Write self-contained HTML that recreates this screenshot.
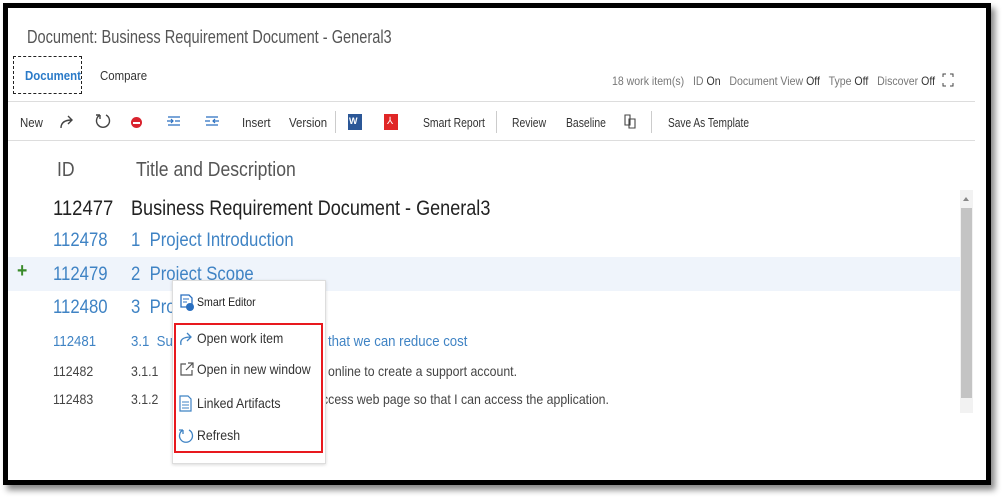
<!DOCTYPE html>
<html><head><style>
body{margin:0;width:1002px;height:497px;background:#fff;position:relative;overflow:hidden;font-family:"Liberation Sans",sans-serif}
.frame{position:absolute;left:3px;top:3px;width:978px;height:472px;border:5px solid #000;background:#fff;box-shadow:4px 5px 6px #888}
.t{position:absolute;white-space:nowrap;transform:scaleX(.88);transform-origin:0 0;line-height:1}
.hl{position:absolute;left:8px;top:257px;width:952px;height:34px;background:#eff4fb}
.ln{position:absolute;left:8px;height:1px;background:#ddd;width:967px}
.blue{color:#3f83c4}
</style></head><body>
<div class="frame"></div>
<div class="hl"></div>
<div class="t" style="left:27px;top:28px;font-size:18px;color:#555;transform:scaleX(.81)">Document: Business Requirement Document - General3</div>
<div style="position:absolute;left:13px;top:56px;width:67px;height:36px;border:1px dashed #222"></div>
<div class="t" style="left:25px;top:69px;font-size:13px;color:#2a7ac8;font-weight:bold">Document</div>
<div class="t" style="left:100px;top:69px;font-size:13px;color:#333">Compare</div>
<div class="t" style="left:612px;top:75px;font-size:12px;color:#777">18 work item(s) &nbsp; ID <span style="color:#333">On</span> &nbsp; Document View <span style="color:#333">Off</span> &nbsp; Type <span style="color:#333">Off</span> &nbsp; Discover <span style="color:#333">Off</span></div>
<svg style="position:absolute;left:942px;top:73px" width="12" height="14"><path d="M1 4V1H4M8 1H11V4M1 10V13H4M8 13H11V10" fill="none" stroke="#444" stroke-width="1"/></svg>
<div class="ln" style="top:101px"></div>
<div class="t" style="left:20px;top:116px;font-size:13px;color:#333">New</div>
<svg style="position:absolute;left:58px;top:113px" width="18" height="18"><path d="M3 15 Q3 7 14 7 M10 3 L14 7 L10 11" fill="none" stroke="#444" stroke-width="1.4"/></svg>
<svg style="position:absolute;left:94px;top:112px" width="18" height="18"><path d="M6 3 A6.5 6.5 0 1 0 12 3 M6 3 L6 7 M6 3 L2 3" fill="none" stroke="#444" stroke-width="1.4"/></svg>
<div style="position:absolute;left:131px;top:117px;width:11px;height:11px;border-radius:50%;background:#d9232e"><div style="margin:5px 2px 0;height:2px;background:#fff"></div></div>
<svg style="position:absolute;left:166px;top:114px" width="16" height="14"><path d="M2 3H14M2 11H14M1 7H7M5 5L7 7L5 9M9 7H14" stroke="#2a6fc0" stroke-width="1.2" fill="none"/></svg>
<svg style="position:absolute;left:204px;top:114px" width="16" height="14"><path d="M2 3H14M2 11H14M1 7H6M9 7H15M11 5L9 7L11 9" stroke="#2a6fc0" stroke-width="1.2" fill="none"/></svg>
<div class="t" style="left:242px;top:116px;font-size:13px;color:#333">Insert</div>
<div class="t" style="left:289px;top:116px;font-size:13px;color:#333">Version</div>
<div style="position:absolute;left:335px;top:111px;width:1px;height:22px;background:#ccc"></div>
<div style="position:absolute;left:348px;top:114px;width:14px;height:16px;background:#2b5797"><span style="position:absolute;left:1px;top:2px;color:#fff;font-size:9px;font-weight:bold">W</span></div>
<div style="position:absolute;left:384px;top:114px;width:14px;height:16px;background:#e02626"><span style="position:absolute;left:3px;top:2px;color:#fff;font-size:10px">⅄</span></div>
<div class="t" style="left:423px;top:116px;font-size:13px;color:#333;transform:scaleX(.8)">Smart Report</div>
<div style="position:absolute;left:496px;top:111px;width:1px;height:22px;background:#ccc"></div>
<div class="t" style="left:512px;top:116px;font-size:13px;color:#333;transform:scaleX(.8)">Review</div>
<div class="t" style="left:566px;top:116px;font-size:13px;color:#333;transform:scaleX(.8)">Baseline</div>
<svg style="position:absolute;left:623px;top:114px" width="14" height="16"><path d="M2 1H7V11H2Z M6 5H12V14H6Z" fill="#fff" stroke="#444" stroke-width="1.1"/></svg>
<div style="position:absolute;left:651px;top:111px;width:1px;height:22px;background:#ccc"></div>
<div class="t" style="left:668px;top:116px;font-size:13px;color:#333;transform:scaleX(.78)">Save As Template</div>
<div class="ln" style="top:140px"></div>
<div class="t" style="left:57px;top:160px;font-size:20px;color:#555">ID</div>
<div class="t" style="left:136px;top:160px;font-size:20px;color:#555">Title and Description</div>
<div class="t" style="left:53px;top:198px;font-size:21px;color:#222">112477</div>
<div class="t" style="left:131px;top:198px;font-size:21px;color:#222;transform:scaleX(.86)">Business Requirement Document - General3</div>
<div class="t blue" style="left:53px;top:231px;font-size:19px">112478</div>
<div class="t blue" style="left:131px;top:231px;font-size:19px">1&nbsp; Project Introduction</div>
<div class="t" style="left:17px;top:261px;font-size:20px;color:#3a8a2a;font-weight:bold">+</div>
<div class="t blue" style="left:53px;top:265px;font-size:19px">112479</div>
<div class="t blue" style="left:131px;top:265px;font-size:19px">2&nbsp; Project Scope</div>
<div class="t blue" style="left:53px;top:298px;font-size:19px">112480</div>
<div class="t blue" style="left:131px;top:298px;font-size:19px">3&nbsp; Pro</div>
<div class="t blue" style="left:53px;top:334px;font-size:15px">112481</div>
<div class="t blue" style="left:131px;top:334px;font-size:15px">3.1&nbsp; Su</div>
<div class="t blue" style="left:328px;top:334px;font-size:15px">that we can reduce cost</div>
<div class="t" style="left:53px;top:364px;font-size:14px;color:#444">112482</div>
<div class="t" style="left:131px;top:364px;font-size:14px;color:#444">3.1.1</div>
<div class="t" style="left:328px;top:364px;font-size:14px;color:#444">online to create a support account.</div>
<div class="t" style="left:53px;top:392px;font-size:14px;color:#444">112483</div>
<div class="t" style="left:131px;top:392px;font-size:14px;color:#444">3.1.2</div>
<div class="t" style="left:322px;top:392px;font-size:14px;color:#444">ccess web page so that I can access the application.</div>
<div style="position:absolute;left:960px;top:190px;width:13px;height:223px;background:#f2f2f2"></div>
<div style="position:absolute;left:963px;top:197px;width:0;height:0;border:3px solid transparent;border-bottom:4px solid #888;border-top:0"></div>
<div style="position:absolute;left:961px;top:208px;width:11px;height:190px;background:#c4c4c4"></div>
<div style="position:absolute;left:172px;top:280px;width:152px;height:182px;background:#fff;border:1px solid #ddd;box-shadow:0 1px 3px rgba(0,0,0,.15)"></div>
<div style="position:absolute;left:174px;top:323px;width:145px;height:126px;border:2px solid #e8191e"></div>
<svg style="position:absolute;left:180px;top:294px" width="14" height="18"><path d="M1 1H9L12 4V13H1Z" fill="#fff" stroke="#2a6fc0" stroke-width="1.3"/><path d="M3 5H9M3 8H7" stroke="#2a6fc0"/><circle cx="10" cy="13" r="4" fill="#2a6fc0"/></svg>
<div class="t" style="left:197px;top:296px;font-size:12px;color:#222">Smart Editor</div>
<svg style="position:absolute;left:178px;top:331px" width="18" height="16"><path d="M3 14 Q1 6 13 6 M9 2 L13 6 L9 10" fill="none" stroke="#3f83c4" stroke-width="1.3"/></svg>
<div class="t" style="left:197px;top:331px;font-size:14px;color:#333">Open work item</div>
<svg style="position:absolute;left:179px;top:361px" width="16" height="16"><path d="M7 3H2V14H13V9 M9 2H14V7 M14 2L7 9" fill="none" stroke="#555" stroke-width="1.2"/></svg>
<div class="t" style="left:197px;top:362px;font-size:14px;color:#333">Open in new window</div>
<svg style="position:absolute;left:179px;top:395px" width="14" height="17"><path d="M1 1H9L12 4V16H1Z" fill="#fff" stroke="#3f83c4" stroke-width="1.2"/><path d="M3 7H10M3 10H10M3 13H10" stroke="#3f83c4"/></svg>
<div class="t" style="left:197px;top:396px;font-size:14px;color:#333">Linked Artifacts</div>
<svg style="position:absolute;left:177px;top:427px" width="18" height="18"><path d="M6 3 A6.5 6.5 0 1 0 12 3 M6 3 L6 7 M6 3 L2 3" fill="none" stroke="#3f83c4" stroke-width="1.3"/></svg>
<div class="t" style="left:197px;top:428px;font-size:14px;color:#333">Refresh</div>
</body></html>
